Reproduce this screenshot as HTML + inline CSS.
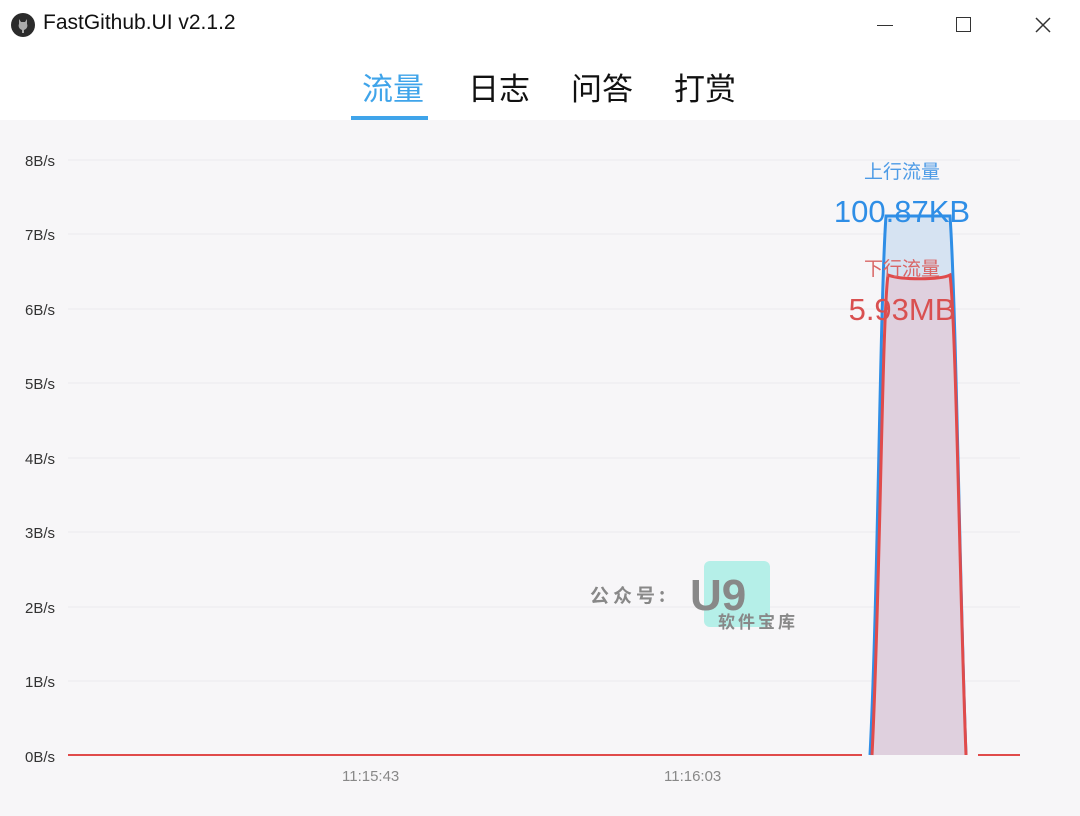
<!DOCTYPE html>
<html><head><meta charset="utf-8"><style>
body{margin:0;width:1080px;height:816px;overflow:hidden;background:#f7f6f8;font-family:"Liberation Sans","Noto Sans CJK SC",sans-serif;position:relative}
.hdr{position:absolute;left:0;top:0;width:1080px;height:120px;background:#fff}
.t{position:absolute;white-space:nowrap}
</style></head><body>
<div class="hdr"></div>
<svg class="t" style="left:10px;top:12px" width="26" height="26"><circle cx="13" cy="13" r="12" fill="#2b2b2b"/><path d="M9 7l2 3h4l2-3v5c1 2 0 5-3 6v3h-2v-3c-3-1-4-4-3-6z" fill="#aaa"/></svg>
<div class="t" style="left:43px;top:11px;font-size:21px;color:#111">FastGithub.UI v2.1.2</div>
<div class="t" style="left:877px;top:25px;width:16px;height:1px;background:#333"></div>
<div class="t" style="left:956px;top:17px;width:13px;height:13px;border:1.5px solid #333"></div>
<svg class="t" style="left:1035px;top:17px" width="16" height="16"><path d="M1 1L15 15M15 1L1 15" stroke="#333" stroke-width="1.5"/></svg>
<div class="t" style="left:362px;top:64px;font-size:31px;color:#3fa4ea">流量</div>
<div class="t" style="left:351px;top:116px;width:77px;height:4px;background:#3fa4ea"></div>
<div class="t" style="left:468px;top:64px;font-size:31px;color:#111">日志</div>
<div class="t" style="left:571px;top:64px;font-size:31px;color:#111">问答</div>
<div class="t" style="left:674px;top:64px;font-size:31px;color:#111">打赏</div>
<svg class="t" style="left:0;top:0" width="1080" height="816" font-family="Liberation Sans, sans-serif">
<g stroke="#ebeaee" stroke-width="1">
<line x1="68" y1="160" x2="1020" y2="160"/><line x1="68" y1="234" x2="1020" y2="234"/><line x1="68" y1="309" x2="1020" y2="309"/><line x1="68" y1="383" x2="1020" y2="383"/><line x1="68" y1="458" x2="1020" y2="458"/><line x1="68" y1="532" x2="1020" y2="532"/><line x1="68" y1="607" x2="1020" y2="607"/><line x1="68" y1="681" x2="1020" y2="681"/>
</g>
<g font-size="15" fill="#333">
<text x="25" y="166">8B/s</text><text x="25" y="240">7B/s</text><text x="25" y="315">6B/s</text><text x="25" y="389">5B/s</text><text x="25" y="464">4B/s</text><text x="25" y="538">3B/s</text><text x="25" y="613">2B/s</text><text x="25" y="687">1B/s</text><text x="25" y="762">0B/s</text>
</g>
<g font-size="15" fill="#888"><text x="342" y="781">11:15:43</text><text x="664" y="781">11:16:03</text></g>
<path d="M870 755 C878 600 880 300 886 216 L950 216 C956 300 960 600 966 755" fill="#d6e3f2" stroke="#2f8ee6" stroke-width="3"/>
<path d="M872 755 C880 600 882 320 888 275 C900 280 940 280 950 275 C956 320 960 600 966 755" fill="#dfd0de" stroke="#e04b4b" stroke-width="3"/>
<line x1="68" y1="755" x2="862" y2="755" stroke="#e04b4b" stroke-width="2"/>
<line x1="978" y1="755" x2="1020" y2="755" stroke="#e04b4b" stroke-width="2"/>
<text x="902" y="178" font-size="19" fill="#4d9be6" text-anchor="middle" font-family="Noto Sans CJK SC, sans-serif">上行流量</text>
<text x="902" y="222" font-size="31" fill="#2f8ee6" text-anchor="middle">100.87KB</text>
<text x="902" y="275" font-size="19" fill="#d96565" text-anchor="middle" font-family="Noto Sans CJK SC, sans-serif">下行流量</text>
<text x="902" y="320" font-size="31" fill="#d95050" text-anchor="middle">5.93MB</text>
<rect x="704" y="561" width="66" height="66" rx="6" fill="#b5efe8"/>
<text x="590" y="602" font-size="19" font-weight="bold" fill="#888" letter-spacing="4" font-family="Noto Sans CJK SC, sans-serif">公众号:</text>
<text x="690" y="610" font-size="44" font-weight="bold" fill="#888">U9</text>
<text x="718" y="628" font-size="17" font-weight="bold" fill="#888" letter-spacing="3" font-family="Noto Sans CJK SC, sans-serif">软件宝库</text>
</svg>
</body></html>
